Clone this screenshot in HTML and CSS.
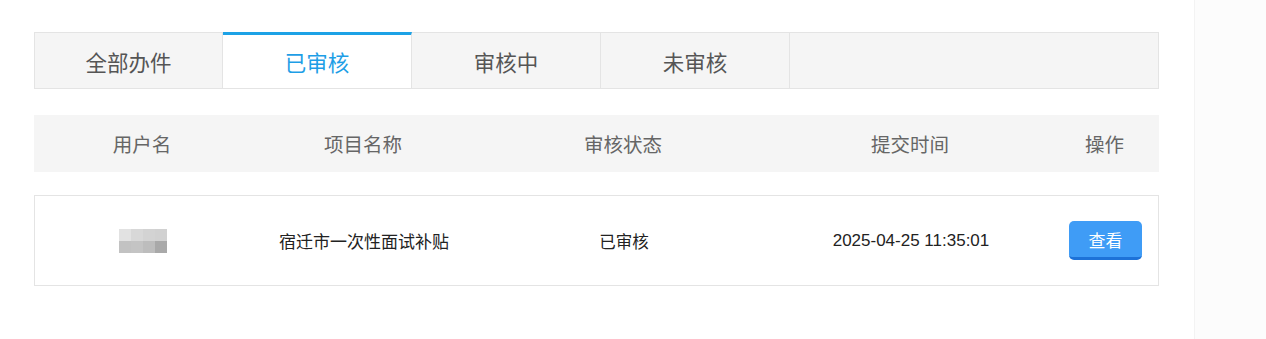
FILE: index.html
```html
<!DOCTYPE html>
<html lang="zh-CN">
<head>
<meta charset="utf-8">
<link rel="stylesheet" href="styles.css">
</head>
<body>
<div class="page">
  <main class="main">
    <nav class="tabs">
      <div class="tab">全部办件</div>
      <div class="tab active">已审核</div>
      <div class="tab">审核中</div>
      <div class="tab">未审核</div>
      <div class="tab-fill"></div>
    </nav>
    <div class="thead">
      <div class="cell">用户名</div>
      <div class="cell">项目名称</div>
      <div class="cell">审核状态</div>
      <div class="cell">提交时间</div>
      <div class="cell">操作</div>
    </div>
    <div class="trow">
      <div class="cell">
        <div class="blur">
          <span class="px a"></span><span class="px b"></span><span class="px c"></span><span class="px d"></span>
          <span class="px e"></span><span class="px f"></span><span class="px g"></span><span class="px h"></span>
        </div>
      </div>
      <div class="cell">宿迁市一次性面试补贴</div>
      <div class="cell status">已审核</div>
      <div class="cell date">2025-04-25 11:35:01</div>
      <div class="cell"><button class="btn">查看</button></div>
    </div>
  </main>
  <aside class="side"></aside>
</div>
</body>
</html>
```
FILE: styles.css
```css
html, body {
  margin: 0;
  padding: 0;
  background: #ffffff;
  font-family: "Noto Sans CJK SC", "Liberation Sans", sans-serif;
}
.page {
  display: flex;
  width: 1266px;
  height: 339px;
}
.main {
  width: 1194px;
  box-sizing: border-box;
  padding: 32px 0 0 34px;
  background: #ffffff;
}
.side {
  flex: 1;
  background: #fcfcfc;
  border-left: 1px solid #f3f3f3;
}
.tabs {
  display: flex;
  width: 1125px;
  height: 57px;
  box-sizing: border-box;
  border: 1px solid #e4e4e4;
  background: #f5f5f5;
}
.tab {
  width: 189px;
  box-sizing: border-box;
  border-right: 1px solid #e4e4e4;
  display: flex;
  align-items: center;
  justify-content: center;
  font-size: 21.5px;
  color: #555555;
  padding-top: 2px;
}
.tab:first-child {
  width: 188px;
}
.tab.active {
  background: #ffffff;
  color: #1e9ee6;
  border-top: 3px solid #1da2e6;
  margin-top: -1px;
  padding-top: 0;
  height: 56px;
}
.tab-fill {
  flex: 1;
}
.thead {
  display: grid;
  grid-template-columns: 216px 226px 294px 280px 109px;
  width: 1125px;
  height: 57px;
  margin-top: 26px;
  background: #f5f5f5;
  align-items: center;
}
.thead .cell {
  text-align: center;
  font-size: 19.5px;
  color: #666666;
}
.trow {
  display: grid;
  grid-template-columns: 216px 226px 294px 280px 109px;
  width: 1125px;
  height: 91px;
  box-sizing: border-box;
  margin-top: 23px;
  border: 1px solid #e4e4e4;
  align-items: center;
}
.trow .cell {
  display: flex;
  justify-content: center;
  align-items: center;
  font-size: 17px;
  color: #222222;
}
.trow .status {
  font-size: 16.5px;
}
.trow .date {
  font-family: "Liberation Sans", Arial, sans-serif;
  font-size: 17px;
  color: #222222;
}
.blur {
  display: grid;
  grid-template-columns: repeat(4, 12px);
  grid-template-rows: 12px 12px;
  margin-left: 0;
}
.px { display: block; }
.px.a { background: #e2e2e2; }
.px.b { background: #d8d8d8; }
.px.c { background: #d3d3d3; }
.px.d { background: #d1d1d1; }
.px.e { background: #c2c2c2; }
.px.f { background: #c4c4c4; }
.px.g { background: #bdbdbd; }
.px.h { background: #a9a9a9; }
.btn {
  width: 73px;
  height: 39px;
  border: none;
  border-bottom: 3px solid #1d72d8;
  border-radius: 5px;
  background: #3f9cf6;
  color: #ffffff;
  font-family: "Noto Sans CJK SC", sans-serif;
  font-size: 17px;
  padding: 0;
  margin-left: 0;
  cursor: pointer;
}
```
